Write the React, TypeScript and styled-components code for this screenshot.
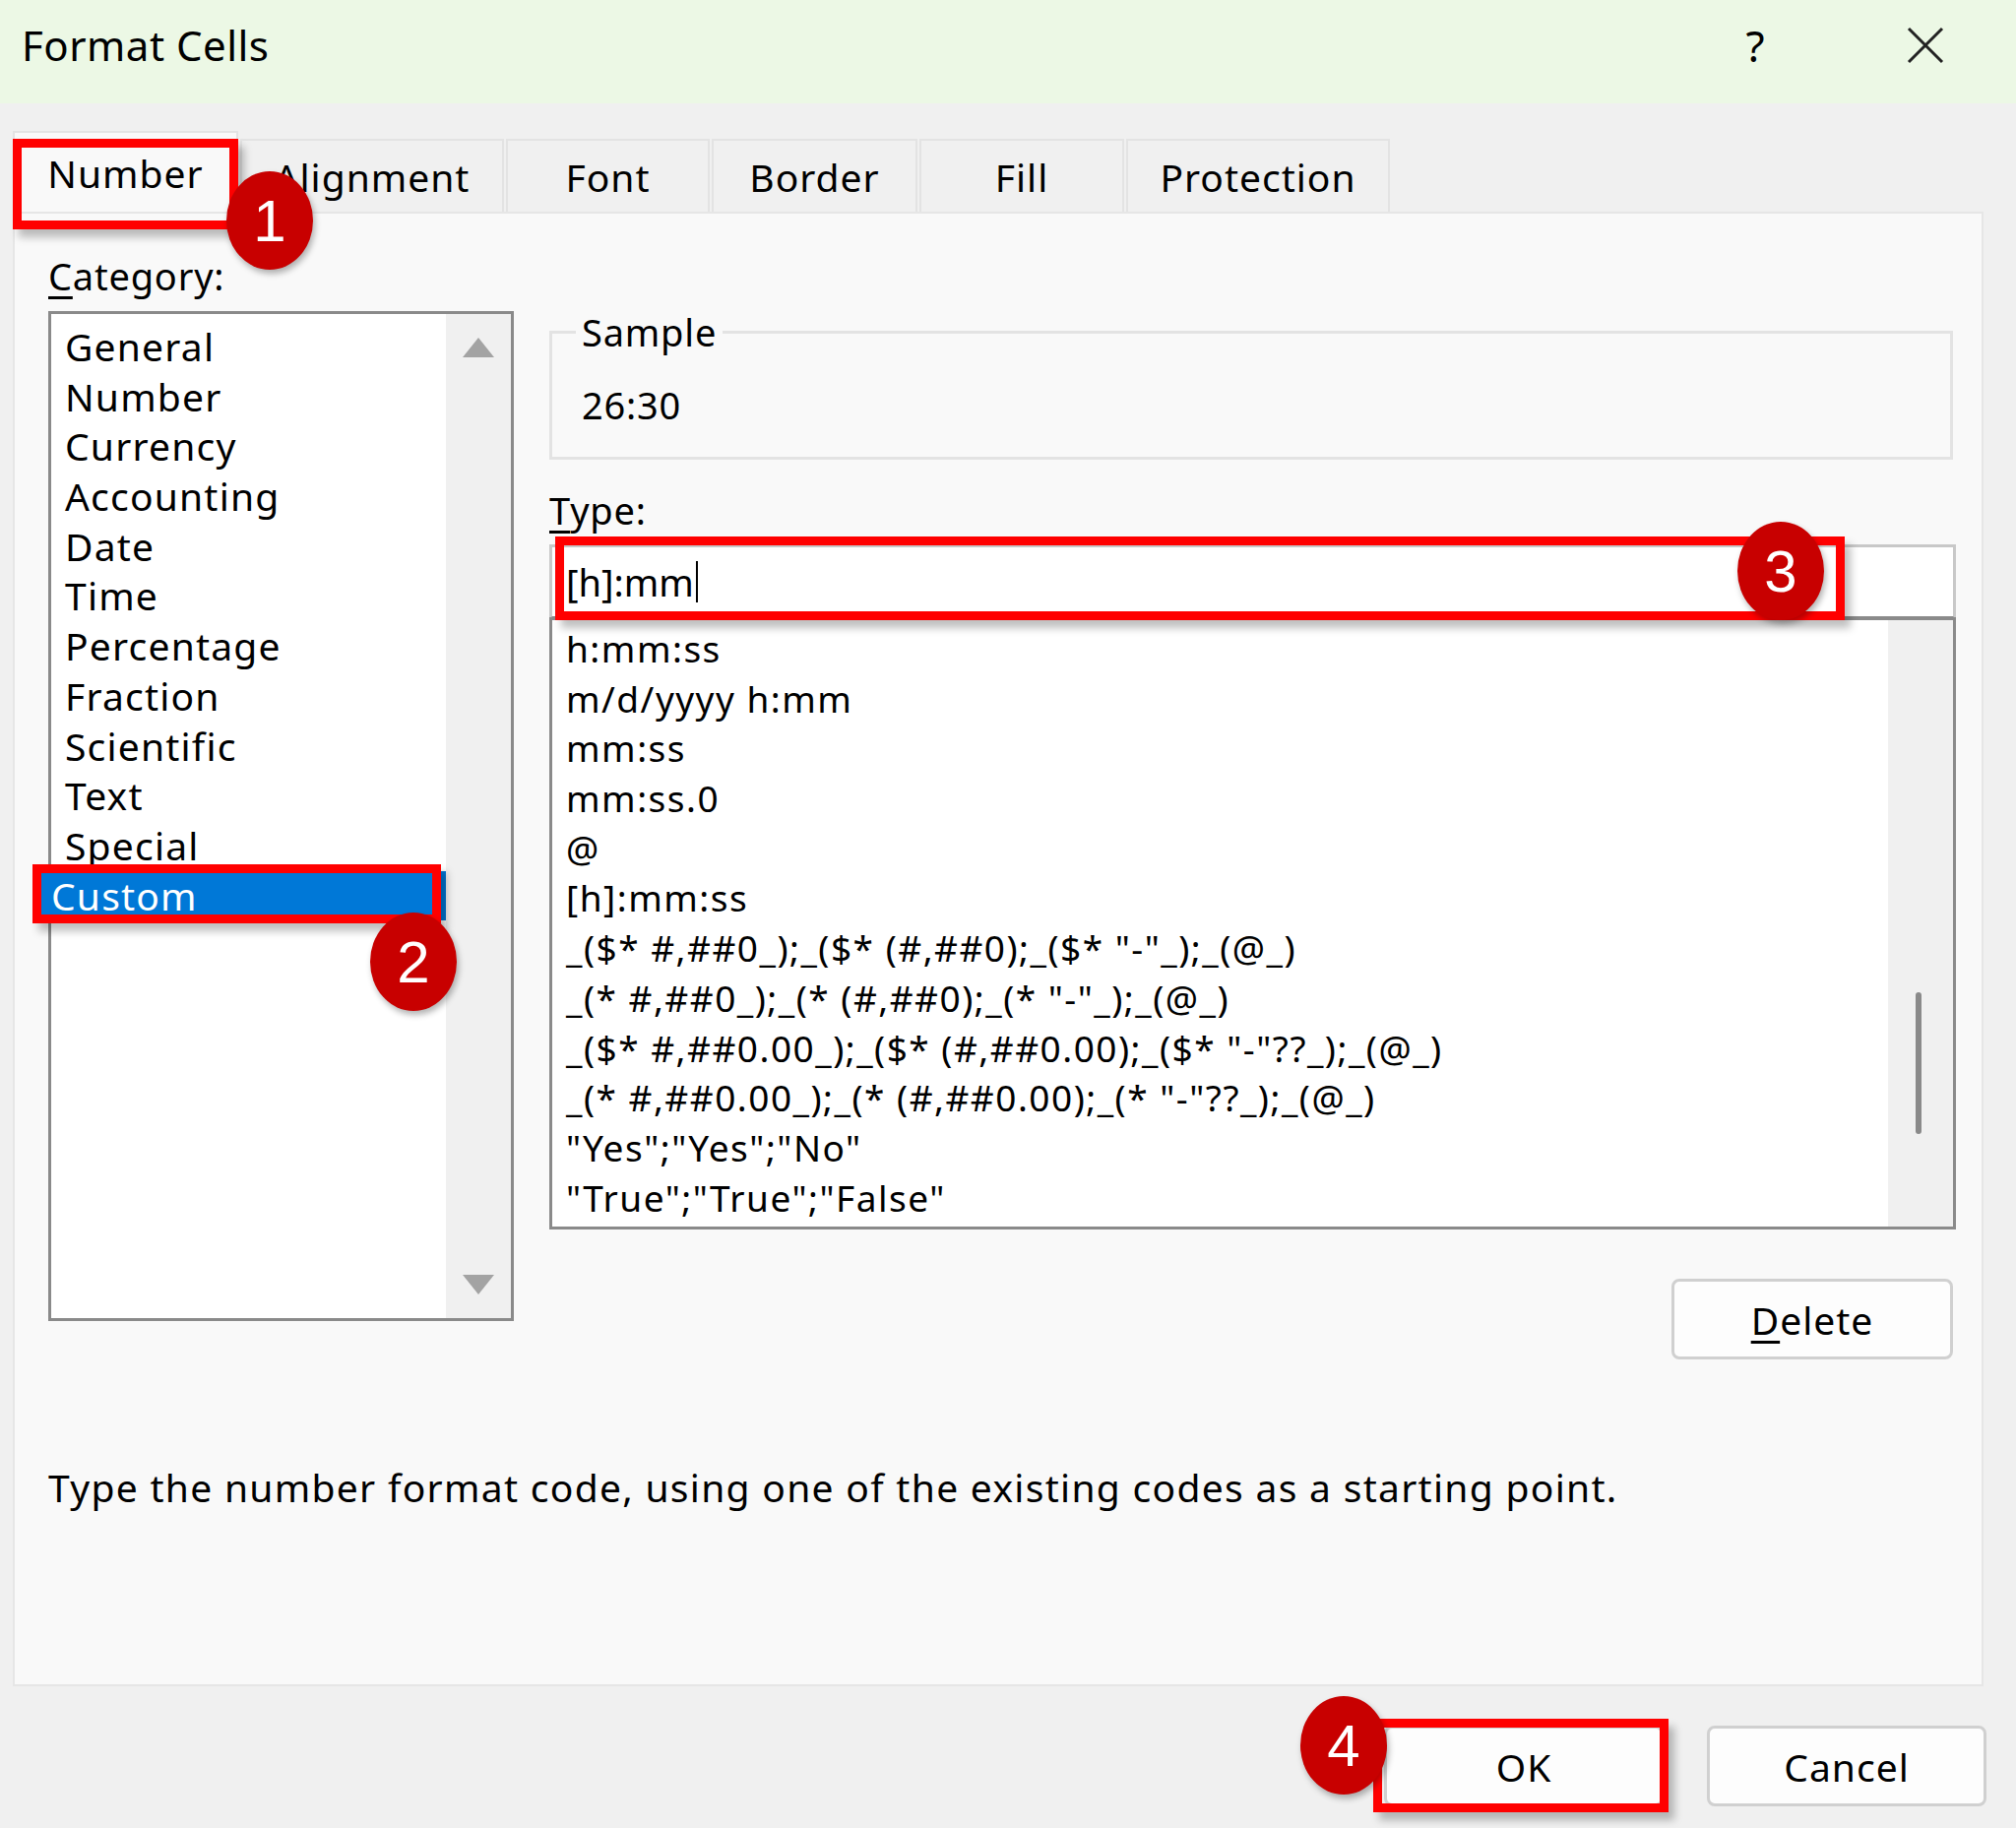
import React from 'react';
import styled, { createGlobalStyle } from 'styled-components';

const Global = createGlobalStyle`
  html, body { margin: 0; padding: 0; }
  body { background: #f0f0f0; font-family: "Noto Sans", "Open Sans", "Liberation Sans", sans-serif; color: #000; }
`;

const Window = styled.div`
  width: 2048px;
  height: 1857px;
  background: #f0f0f0;
  position: relative;
  overflow: hidden;
`;

const TitleBar = styled.div`
  height: 105px;
  background: #ecf8e5;
  display: flex;
  align-items: center;
  padding: 0 32px 0 22px;
  box-sizing: border-box;
`;

const Title = styled.div`
  font-size: 42px;
  flex: 1;
  margin-top: -14px;
  letter-spacing: 0.5px;
`;

const TitleIcon = styled.div<{ $mr?: number }>`
  width: 120px;
  margin-right: ${p => p.$mr || 0}px;
  display: flex;
  justify-content: center;
  margin-top: -14px;
  font-size: 44px;
`;

const Tabs = styled.div`
  display: flex;
  margin: 36px 0 0 13px;
  height: 74px;
  align-items: flex-end;
`;

const Tab = styled.div<{ $w: number; $active?: boolean }>`
  width: ${p => p.$w}px;
  height: ${p => (p.$active ? 82 : 74)}px;
  margin-right: 2px;
  background: ${p => (p.$active ? '#f9f9f9' : '#f0f0f0')};
  border: 2px solid #e3e3e3;
  border-bottom: none;
  box-sizing: border-box;
  display: flex;
  align-items: center;
  justify-content: center;
  font-size: 39px;
  letter-spacing: 1px;
`;

const Panel = styled.div`
  margin: 0 33px 0 13px;
  height: 1498px;
  background: #f9f9f9;
  border: 2px solid #e6e6e6;
  box-sizing: border-box;
  display: grid;
  grid-template-columns: 473px 1fr;
  grid-template-rows: auto auto;
  column-gap: 36px;
  padding: 38px 28px 0 34px;
`;

const Label = styled.div`
  font-size: 38px;
  height: 50px;
  line-height: 50px;
  letter-spacing: 0.8px;
  & u { text-decoration-thickness: 3px; text-underline-offset: 6px; }
`;

const LeftCol = styled.div`
  display: flex;
  flex-direction: column;
  gap: 11px;
`;

const ListBox = styled.div<{ $h: number }>`
  height: ${p => p.$h}px;
  border: 3px solid #8a8a8a;
  background: #fff;
  box-sizing: border-box;
  display: flex;
`;

const Items = styled.div<{ $pt: number }>`
  flex: 1;
  padding-top: ${p => p.$pt}px;
  display: flex;
  flex-direction: column;
`;

const Item = styled.div<{ $sel?: boolean; $mono?: boolean }>`
  height: 50.7px;
  flex-shrink: 0;
  line-height: 50.7px;
  font-size: ${p => (p.$mono ? 37 : 39)}px;
  padding-left: 14px;
  margin-left: ${p => (p.$sel ? -14 : 0)}px;
  background: ${p => (p.$sel ? '#0078d7' : 'transparent')};
  color: ${p => (p.$sel ? '#fff' : '#000')};
  white-space: nowrap;
  letter-spacing: ${p => (p.$mono ? '1.5px' : '1.2px')};
`;

const Scroll = styled.div<{ $w: number }>`
  width: ${p => p.$w}px;
  background: #f0f0f0;
  position: relative;
  display: flex;
  flex-direction: column;
  justify-content: space-between;
  align-items: center;
  padding: 24px 0;
  box-sizing: border-box;
`;

const Arrow = styled.div<{ $down?: boolean }>`
  width: 0;
  height: 0;
  border-left: 16px solid transparent;
  border-right: 16px solid transparent;
  ${p => (p.$down ? 'border-top: 20px solid #a3a3a3;' : 'border-bottom: 20px solid #a3a3a3;')}
`;

const Thumb = styled.div`
  position: absolute;
  left: 28px;
  top: 378px;
  width: 6px;
  height: 144px;
  background: #8a8a8a;
  border-radius: 3px;
`;

const RightCol = styled.div`
  display: flex;
  flex-direction: column;
  padding-top: 56px;
`;

const Fieldset = styled.fieldset`
  margin: 0;
  height: 156px;
  border: 3px solid #e3e3e3;
  padding: 0 30px;
  box-sizing: border-box;
  font-size: 38px;
  width: 1426px;
  letter-spacing: 0.8px;
  & legend { padding: 0 6px; margin-left: -6px; }
`;

const SampleValue = styled.div`
  margin-top: 22px;
`;

const TypeInput = styled.div`
  height: 76px;
  border: 3px solid #c8c8c8;
  border-bottom-color: #8a8a8a;
  background: #fff;
  box-sizing: border-box;
  font-size: 38px;
  display: flex;
  align-items: center;
  padding-left: 14px;
  margin-top: 10px;
  width: 1429px;
`;

const Caret = styled.span`
  display: inline-block;
  width: 2px;
  height: 42px;
  background: #000;
  margin-left: 2px;
`;

const ButtonRow = styled.div`
  display: flex;
  justify-content: flex-end;
  margin-top: 50px;
  width: 1426px;
`;

const Button = styled.div<{ $w: number }>`
  width: ${p => p.$w}px;
  height: 82px;
  background: #fdfdfd;
  border: 3px solid #d0d0d0;
  border-radius: 8px;
  box-sizing: border-box;
  display: flex;
  align-items: center;
  justify-content: center;
  font-size: 39px;
  letter-spacing: 1px;
  & u { text-decoration-thickness: 3px; text-underline-offset: 6px; }
`;

const Hint = styled.div`
  grid-column: 1 / 3;
  font-size: 39px;
  margin-top: -62px;
  letter-spacing: 1.3px;
`;

const Footer = styled.div`
  display: flex;
  justify-content: flex-end;
  gap: 44px;
  padding: 40px 30px 0 0;
`;

const RedBox = styled.div<{ $l: number; $t: number; $w: number; $h: number }>`
  position: absolute;
  left: ${p => p.$l}px;
  top: ${p => p.$t}px;
  width: ${p => p.$w}px;
  height: ${p => p.$h}px;
  border: 9px solid #ff0000;
  box-sizing: border-box;
  box-shadow: 6px 8px 8px rgba(0, 0, 0, 0.25);
  pointer-events: none;
`;

const Badge = styled.div<{ $x: number; $y: number }>`
  position: absolute;
  left: ${p => p.$x - 44}px;
  top: ${p => p.$y - 50}px;
  width: 88px;
  height: 100px;
  border-radius: 50%;
  background: #c80000;
  color: #fff;
  font-size: 60px;
  font-family: "Liberation Sans", Arial, sans-serif;
  display: flex;
  align-items: center;
  justify-content: center;
  box-shadow: 2px 4px 6px rgba(0, 0, 0, 0.3);
`;

const categories = ['General', 'Number', 'Currency', 'Accounting', 'Date', 'Time', 'Percentage', 'Fraction', 'Scientific', 'Text', 'Special', 'Custom'];

const codes = [
  'h:mm:ss',
  'm/d/yyyy h:mm',
  'mm:ss',
  'mm:ss.0',
  '@',
  '[h]:mm:ss',
  '_($* #,##0_);_($* (#,##0);_($* "-"_);_(@_)',
  '_(* #,##0_);_(* (#,##0);_(* "-"_);_(@_)',
  '_($* #,##0.00_);_($* (#,##0.00);_($* "-"??_);_(@_)',
  '_(* #,##0.00_);_(* (#,##0.00);_(* "-"??_);_(@_)',
  '"Yes";"Yes";"No"',
  '"True";"True";"False"',
];

const tabs: [string, number][] = [
  ['Number', 229],
  ['Alignment', 268],
  ['Font', 207],
  ['Border', 209],
  ['Fill', 208],
  ['Protection', 268],
];

export default function App() {
  return (
    <Window>
      <Global />
      <TitleBar>
        <Title>Format Cells</Title>
        <TitleIcon $mr={53}>?</TitleIcon>
        <TitleIcon>
          <svg width="40" height="40" viewBox="0 0 40 40">
            <path d="M3 3 L37 37 M37 3 L3 37" stroke="#222" strokeWidth="3" />
          </svg>
        </TitleIcon>
      </TitleBar>
      <Tabs>
        {tabs.map(([t, w], i) => (
          <Tab key={t} $w={w} $active={i === 0}>{t}</Tab>
        ))}
      </Tabs>
      <Panel>
        <LeftCol>
          <Label><u>C</u>ategory:</Label>
          <ListBox $h={1026}>
            <Items $pt={8}>
              {categories.map(c => (
                <Item key={c} $sel={c === 'Custom'}>{c}</Item>
              ))}
            </Items>
            <Scroll $w={66}>
              <Arrow />
              <Arrow $down />
            </Scroll>
          </ListBox>
        </LeftCol>
        <RightCol>
          <Fieldset>
            <legend>Sample</legend>
            <SampleValue>26:30</SampleValue>
          </Fieldset>
          <Label style={{ marginTop: 26 }}><u>T</u>ype:</Label>
          <TypeInput>[h]:mm<Caret /></TypeInput>
          <ListBox $h={622} style={{ width: 1429, marginTop: -2 }}>
            <Items $pt={4}>
              {codes.map(c => (
                <Item key={c} $mono>{c}</Item>
              ))}
            </Items>
            <Scroll $w={66}>
              <Thumb />
            </Scroll>
          </ListBox>
          <ButtonRow>
            <Button $w={286}><u>D</u>elete</Button>
          </ButtonRow>
        </RightCol>
        <Hint>Type the number format code, using one of the existing codes as a starting point.</Hint>
      </Panel>
      <Footer>
        <Button $w={284}>OK</Button>
        <Button $w={284}>Cancel</Button>
      </Footer>

      <RedBox $l={13} $t={141} $w={229} $h={92} />
      <RedBox $l={33} $t={878} $w={415} $h={60} />
      <RedBox $l={564} $t={545} $w={1310} $h={85} />
      <RedBox $l={1395} $t={1746} $w={300} $h={95} />
      <Badge $x={274} $y={224}>1</Badge>
      <Badge $x={420} $y={977}>2</Badge>
      <Badge $x={1809} $y={580}>3</Badge>
      <Badge $x={1365} $y={1773}>4</Badge>
    </Window>
  );
}
